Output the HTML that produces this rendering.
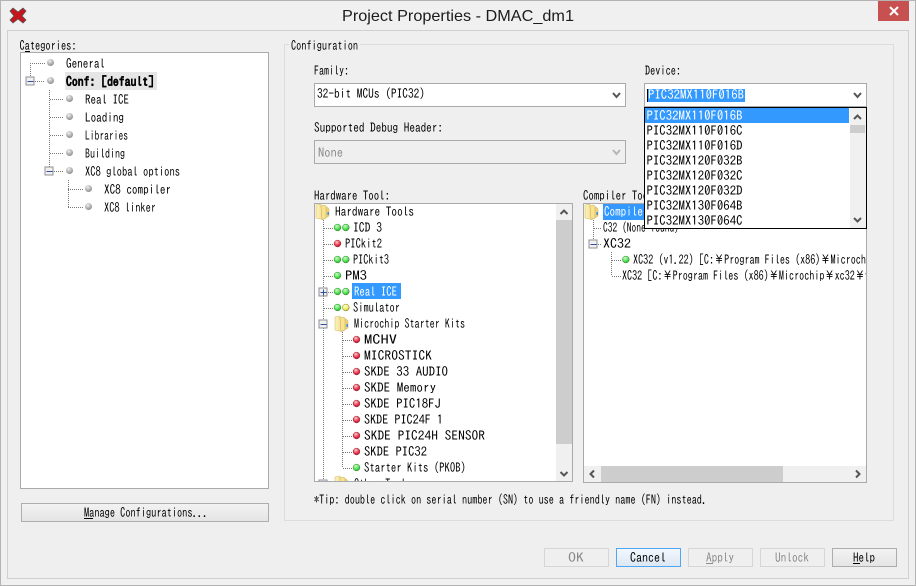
<!DOCTYPE html>
<html><head><meta charset="utf-8"><title>Project Properties - DMAC_dm1</title>
<style>
html,body{margin:0;padding:0;width:916px;height:586px;overflow:hidden;background:#f0f0f0}
svg{display:block}
text{font-family:"IPAGothic","Liberation Sans",sans-serif;font-size:13px;fill:#000;white-space:pre}
.g{fill:#8a8a8a}
.w{fill:#fff}
.d{fill:none;stroke:#777;stroke-width:1;stroke-dasharray:1 1;shape-rendering:crispEdges}
.b{fill:#fff;stroke:#a9a9ae;stroke-width:1;shape-rendering:crispEdges}
.ar{fill:none;stroke:#555;stroke-width:2}
.arl{fill:none;stroke:#b5b5b5;stroke-width:2}
.btn{fill:#efefef;stroke:#d6d6d6;stroke-width:1;shape-rendering:crispEdges}
</style></head><body>
<svg width="916" height="586" viewBox="0 0 916 586" xmlns="http://www.w3.org/2000/svg">
<defs>
<radialGradient id="gr" cx=".4" cy=".3" r=".8"><stop offset="0" stop-color="#efefef"/><stop offset="1" stop-color="#808080"/></radialGradient>
<radialGradient id="gn" cx=".4" cy=".3" r=".8"><stop offset="0" stop-color="#c8ffc0"/><stop offset=".6" stop-color="#50dc50"/><stop offset="1" stop-color="#1c8c1c"/></radialGradient>
<radialGradient id="rd" cx=".4" cy=".3" r=".8"><stop offset="0" stop-color="#ffc8c8"/><stop offset=".55" stop-color="#e83c50"/><stop offset="1" stop-color="#901020"/></radialGradient>
<radialGradient id="yl" cx=".4" cy=".3" r=".8"><stop offset="0" stop-color="#ffffd0"/><stop offset=".6" stop-color="#ecec60"/><stop offset="1" stop-color="#8c8c20"/></radialGradient>
<linearGradient id="bg" x1="0" y1="0" x2="0" y2="1"><stop offset="0" stop-color="#f3f3f3"/><stop offset="1" stop-color="#e4e4e4"/></linearGradient>
<linearGradient id="bc" x1="0" y1="0" x2="0" y2="1"><stop offset="0" stop-color="#f2f8fe"/><stop offset="1" stop-color="#dde7f3"/></linearGradient>
<linearGradient id="fo" x1="0" y1="0" x2="1" y2="0"><stop offset="0" stop-color="#fdf2b8"/><stop offset="1" stop-color="#e8cd78"/></linearGradient>
<g id="sg"><circle r="3.5" fill="url(#gr)"/></g>
<g id="sn"><circle r="3.4" fill="url(#gn)" stroke="#2a8a2a" stroke-width=".5"/></g>
<g id="sr"><circle r="3.4" fill="url(#rd)" stroke="#982030" stroke-width=".5"/></g>
<g id="sy"><circle r="3.4" fill="url(#yl)" stroke="#808020" stroke-width=".5"/></g>
<g id="minus"><rect x="-4" y="-4" width="8" height="8" fill="#f0f0f0" stroke="#8f8f98" stroke-width="1" shape-rendering="crispEdges"/><path d="M-2.5 .5H3.5" stroke="#33509a" stroke-width="1" shape-rendering="crispEdges"/></g>
<g id="plus"><rect x="-4" y="-4" width="8" height="8" fill="#f0f0f0" stroke="#8f8f98" stroke-width="1" shape-rendering="crispEdges"/><path d="M-2.5 .5H3.5M.5 -2.5V3.5" stroke="#33509a" stroke-width="1" shape-rendering="crispEdges"/></g>
<g id="folder"><path d="M0 1L5 0V3H11L13 5V12L7 15.5L0 14Z" fill="url(#fo)" stroke="#d8bf70" stroke-width=".6"/><path d="M5 2L8 1L10 2V14L6 15.5Z" fill="#f8e490" stroke="#c8a850" stroke-width=".5"/><rect x="11.4" y="8" width="1.6" height="3" fill="#4a90d0"/></g>
<clipPath id="cc"><rect x="584" y="204" width="282" height="262"/></clipPath>
<clipPath id="ch"><rect x="315" y="204" width="241" height="277"/></clipPath>
</defs>

<rect x=".5" y=".5" width="915" height="585" fill="#f0f0f0" stroke="#b4b4b4"/>
<rect x="7.5" y="30.5" width="901" height="548" fill="#efefef" stroke="#d0d0d0"/>

<!-- title bar -->
<path d="M10 11L13 8L18 12L23 8L26 11L22 16L26 20L23 23L18 19L13 23L10 20L14 16Z" fill="#c4161c" stroke="#555" stroke-width=".8"/>
<text x="342" y="21" textLength="232" lengthAdjust="spacingAndGlyphs" style="font-family:'Liberation Sans',sans-serif;font-size:16px;fill:#1c1c1c">Project Properties - DMAC_dm1</text>
<rect x="878" y="1" width="31" height="20" fill="#c75050"/>
<path d="M890 7L898 15M898 7L890 15" stroke="#fff" stroke-width="2"/>

<!-- categories -->
<text x="19.5" y="50" textLength="57" lengthAdjust="spacingAndGlyphs">Categories:</text>
<path d="M25 51.5H30" stroke="#000" shape-rendering="crispEdges"/>
<rect x="20.5" y="52.5" width="248" height="436" class="b"/>
<path class="d" d="M30.5 63V77M30 63.5H45M35 81.5H45M49.5 90V167M50 99.5H64M50 117.5H64M50 135.5H64M50 153.5H64M54 171.5H64M68.5 180V207M68 189.5H83M68 207.5H83"/>
<use href="#minus" x="30" y="81"/><use href="#minus" x="49" y="171"/>
<use href="#sg" x="50.5" y="62.5"/><use href="#sg" x="50.5" y="80.5"/>
<use href="#sg" x="69.5" y="98.5"/><use href="#sg" x="69.5" y="116.5"/><use href="#sg" x="69.5" y="134.5"/><use href="#sg" x="69.5" y="152.5"/><use href="#sg" x="69.5" y="170.5"/>
<use href="#sg" x="88.5" y="188.5"/><use href="#sg" x="88.5" y="206.5"/>
<rect x="65" y="72" width="92" height="18" fill="#e6e6e6"/>
<text x="66" y="68" textLength="39" lengthAdjust="spacingAndGlyphs">General</text>
<text x="66" y="86" textLength="88" lengthAdjust="spacingAndGlyphs" font-weight="bold" stroke="#000" stroke-width=".3">Conf: [default]</text>
<text x="85" y="104" textLength="44" lengthAdjust="spacingAndGlyphs">Real ICE</text>
<text x="85" y="122" textLength="39" lengthAdjust="spacingAndGlyphs">Loading</text>
<text x="85" y="140" textLength="43" lengthAdjust="spacingAndGlyphs">Libraries</text>
<text x="85" y="158" textLength="40" lengthAdjust="spacingAndGlyphs">Building</text>
<text x="85" y="176" textLength="95" lengthAdjust="spacingAndGlyphs">XC8 global options</text>
<text x="104" y="194" textLength="67" lengthAdjust="spacingAndGlyphs">XC8 compiler</text>
<text x="104" y="212" textLength="52" lengthAdjust="spacingAndGlyphs">XC8 linker</text>

<rect x="21.5" y="503.5" width="247" height="18" fill="url(#bg)" stroke="#adadad" shape-rendering="crispEdges"/>
<text x="84" y="517" textLength="124" lengthAdjust="spacingAndGlyphs">Manage Configurations...</text>
<path d="M84 518.5H93" stroke="#000" shape-rendering="crispEdges"/>

<!-- configuration group -->
<rect x="284.5" y="44.5" width="609" height="476" fill="none" stroke="#dcdcdc" shape-rendering="crispEdges"/>
<rect x="289" y="40" width="71" height="10" fill="#efefef"/>
<text x="291" y="50" textLength="67" lengthAdjust="spacingAndGlyphs">Configuration</text>

<text x="314" y="75" textLength="35" lengthAdjust="spacingAndGlyphs">Family:</text>
<rect x="314.5" y="83.5" width="311" height="23" class="b"/>
<text x="317" y="98" textLength="108" lengthAdjust="spacingAndGlyphs">32-bit MCUs (PIC32)</text>
<path class="ar" d="M613 93L616.5 97L620 93"/>

<text x="314" y="132" textLength="129" lengthAdjust="spacingAndGlyphs">Supported Debug Header:</text>
<rect x="314.5" y="140.5" width="311" height="23" fill="#efefef" stroke="#a9a9ae" shape-rendering="crispEdges"/>
<text x="318" y="157" textLength="25" lengthAdjust="spacingAndGlyphs" class="g">None</text>
<path class="arl" d="M613 150L616.5 154L620 150"/>

<text x="645" y="75" textLength="36" lengthAdjust="spacingAndGlyphs">Device:</text>
<rect x="644.5" y="83.5" width="222" height="23" class="b"/>
<rect x="647" y="89" width="98" height="13" fill="#3399ff"/>
<rect x="647" y="89" width="1" height="13" fill="#000"/>
<text x="648" y="99" textLength="96" lengthAdjust="spacingAndGlyphs" class="w">PIC32MX110F016B</text>
<path class="ar" d="M854 93L857.5 97L861 93"/>

<!-- hardware tree -->
<text x="314" y="200" textLength="76" lengthAdjust="spacingAndGlyphs">Hardware Tool:</text>
<rect x="314.5" y="203.5" width="258" height="278" class="b"/>
<g clip-path="url(#ch)">
<path class="d" d="M323.5 218V480M324 228.5H333M324 244.5H333M324 260.5H333M324 276.5H333M328 292.5H333M324 308.5H333M342.5 332V468M343 340.5H352M343 356.5H352M343 372.5H352M343 388.5H352M343 404.5H352M343 420.5H352M343 436.5H352M343 452.5H352M343 468.5H352"/>
<use href="#folder" x="316" y="204"/>
<use href="#plus" x="323" y="292"/><use href="#minus" x="323" y="324"/><use href="#minus" x="323" y="484"/>
<use href="#folder" x="335" y="316"/><use href="#folder" x="335" y="476"/>
<use href="#sn" x="337.5" y="227.5"/><use href="#sn" x="345.8" y="227.5"/>
<use href="#sr" x="337.5" y="243.5"/>
<use href="#sn" x="337.5" y="259.5"/><use href="#sn" x="345.8" y="259.5"/>
<use href="#sn" x="337.5" y="275.5"/>
<use href="#sn" x="337.5" y="291.5"/><use href="#sn" x="345.8" y="291.5"/>
<use href="#sn" x="337.5" y="307.5"/><use href="#sy" x="345.8" y="307.5"/>
<use href="#sr" x="356.5" y="339.5"/><use href="#sr" x="356.5" y="355.5"/><use href="#sr" x="356.5" y="371.5"/><use href="#sr" x="356.5" y="387.5"/><use href="#sr" x="356.5" y="403.5"/><use href="#sr" x="356.5" y="419.5"/><use href="#sr" x="356.5" y="435.5"/><use href="#sr" x="356.5" y="451.5"/>
<use href="#sn" x="356.5" y="467.5"/>
<rect x="352" y="283" width="49" height="16" fill="#3399ff"/>
<text x="335" y="216" textLength="79" lengthAdjust="spacingAndGlyphs">Hardware Tools</text>
<text x="353" y="232" textLength="29" lengthAdjust="spacingAndGlyphs">ICD 3</text>
<text x="345" y="248" textLength="37" lengthAdjust="spacingAndGlyphs">PICkit2</text>
<text x="353" y="264" textLength="36" lengthAdjust="spacingAndGlyphs">PICkit3</text>
<text x="345" y="280" textLength="22" lengthAdjust="spacingAndGlyphs">PM3</text>
<text x="354" y="296" textLength="43" lengthAdjust="spacingAndGlyphs" class="w">Real ICE</text>
<text x="353" y="312" textLength="47" lengthAdjust="spacingAndGlyphs">Simulator</text>
<text x="354" y="328" textLength="111" lengthAdjust="spacingAndGlyphs">Microchip Starter Kits</text>
<text x="364" y="344" textLength="33" lengthAdjust="spacingAndGlyphs">MCHV</text>
<text x="364" y="360" textLength="68" lengthAdjust="spacingAndGlyphs">MICROSTICK</text>
<text x="364" y="376" textLength="84" lengthAdjust="spacingAndGlyphs">SKDE 33 AUDIO</text>
<text x="364" y="392" textLength="72" lengthAdjust="spacingAndGlyphs">SKDE Memory</text>
<text x="364" y="408" textLength="77" lengthAdjust="spacingAndGlyphs">SKDE PIC18FJ</text>
<text x="364" y="424" textLength="79" lengthAdjust="spacingAndGlyphs">SKDE PIC24F 1</text>
<text x="364" y="440" textLength="121" lengthAdjust="spacingAndGlyphs">SKDE PIC24H SENSOR</text>
<text x="364" y="456" textLength="63" lengthAdjust="spacingAndGlyphs">SKDE PIC32</text>
<text x="364" y="472" textLength="102" lengthAdjust="spacingAndGlyphs">Starter Kits (PKOB)</text>
<text x="354" y="488" textLength="57" lengthAdjust="spacingAndGlyphs">Other Tools</text>
</g>
<rect x="556" y="204" width="16" height="277" fill="#f0f0f0"/>
<rect x="556" y="220" width="16" height="224" fill="#cdcdcd"/>
<path class="ar" d="M560.5 214L564 210.5L567.5 214"/>
<path class="ar" d="M560.5 472L564 475.5L567.5 472"/>

<!-- compiler tree -->
<text x="583" y="200" textLength="76" lengthAdjust="spacingAndGlyphs">Compiler Tool:</text>
<rect x="583.5" y="203.5" width="283" height="279" class="b"/>
<g clip-path="url(#cc)">
<path class="d" d="M593.5 218V240M594 228.5H602M598 244.5H602M611.5 252V276M612 260.5H621M612 276.5H621"/>
<use href="#folder" x="585" y="204"/>
<use href="#minus" x="593" y="244"/>
<use href="#sn" x="625.8" y="259.5"/>
<rect x="603" y="204" width="50" height="16" fill="#3399ff"/>
<text x="604" y="216" textLength="50" lengthAdjust="spacingAndGlyphs" class="w">Compilers</text>
<text x="603" y="232" textLength="76" lengthAdjust="spacingAndGlyphs">C32 (None found)</text>
<text x="603" y="248" textLength="28" lengthAdjust="spacingAndGlyphs">XC32</text>
<text x="633" y="264" textLength="238" lengthAdjust="spacingAndGlyphs">XC32 (v1.22) [C:¥Program Files (x86)¥Microchi</text>
<text x="622" y="280" textLength="248" lengthAdjust="spacingAndGlyphs">XC32 [C:¥Program Files (x86)¥Microchip¥xc32¥v</text>
</g>
<rect x="584" y="466" width="282" height="16" fill="#f0f0f0"/>
<rect x="601" y="466" width="182" height="16" fill="#cdcdcd"/>
<path class="ar" d="M594 470.5L590.5 474L594 477.5"/>
<path class="ar" d="M856 470.5L859.5 474L856 477.5"/>

<!-- dropdown -->
<rect x="644.5" y="107.5" width="222" height="121" fill="#fff" stroke="#000" shape-rendering="crispEdges"/>
<rect x="645" y="108" width="204" height="15" fill="#3399ff"/>
<rect x="850" y="108" width="16" height="120" fill="#f0f0f0"/>
<rect x="850" y="125" width="15" height="8" fill="#cdcdcd"/>
<path class="ar" d="M854 119L857.5 115.5L861 119"/>
<path class="ar" d="M854 218L857.5 221.5L861 218"/>
<text x="646.5" y="120" textLength="96" lengthAdjust="spacingAndGlyphs" class="w">PIC32MX110F016B</text>
<text x="646.5" y="135" textLength="96" lengthAdjust="spacingAndGlyphs">PIC32MX110F016C</text>
<text x="646.5" y="150" textLength="96" lengthAdjust="spacingAndGlyphs">PIC32MX110F016D</text>
<text x="646.5" y="165" textLength="96" lengthAdjust="spacingAndGlyphs">PIC32MX120F032B</text>
<text x="646.5" y="180" textLength="96" lengthAdjust="spacingAndGlyphs">PIC32MX120F032C</text>
<text x="646.5" y="195" textLength="96" lengthAdjust="spacingAndGlyphs">PIC32MX120F032D</text>
<text x="646.5" y="210" textLength="96" lengthAdjust="spacingAndGlyphs">PIC32MX130F064B</text>
<text x="646.5" y="225" textLength="96" lengthAdjust="spacingAndGlyphs">PIC32MX130F064C</text>

<text x="314" y="504" textLength="393" lengthAdjust="spacingAndGlyphs">*Tip: double click on serial number (SN) to use a friendly name (FN) instead.</text>

<!-- buttons -->
<rect x="544.5" y="548.5" width="64" height="18" class="btn"/>
<text x="568" y="562" textLength="16" lengthAdjust="spacingAndGlyphs" class="g">OK</text>
<rect x="616.5" y="548.5" width="64" height="18" fill="url(#bc)" stroke="#4ea6f5" shape-rendering="crispEdges"/>
<text x="630" y="562" textLength="36" lengthAdjust="spacingAndGlyphs">Cancel</text>
<rect x="688.5" y="548.5" width="64" height="18" class="btn"/>
<text x="706" y="562" textLength="28" lengthAdjust="spacingAndGlyphs" class="g">Apply</text>
<path d="M706 563.5H713" stroke="#8a8a8a" shape-rendering="crispEdges"/>
<rect x="760.5" y="548.5" width="64" height="18" class="btn"/>
<text x="775" y="562" textLength="34" lengthAdjust="spacingAndGlyphs" class="g">Unlock</text>
<rect x="832.5" y="548.5" width="64" height="18" fill="url(#bg)" stroke="#adadad" shape-rendering="crispEdges"/>
<text x="853" y="562" textLength="22" lengthAdjust="spacingAndGlyphs">Help</text>
<path d="M853 563.5H860" stroke="#000" shape-rendering="crispEdges"/>
</svg>
</body></html>
